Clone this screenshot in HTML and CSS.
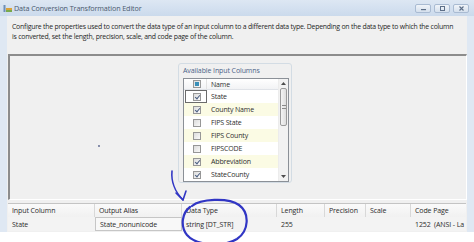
FILE: index.html
```html
<!DOCTYPE html>
<html lang="en">
<head>
  <meta charset="UTF-8">
  <title>Data Conversion Transformation Editor</title>
  <link rel="stylesheet" href="styles.css">
</head>
<body>
  <div class="window">
    <div class="titlebar">
      <svg class="app-icon" width="10" height="9" viewBox="0 0 10 9">
        <rect x="0.5" y="1" width="2" height="7" fill="#6f8fb6"/>
        <rect x="3" y="4" width="6" height="4" fill="#d9a33a"/>
        <rect x="3" y="6" width="6" height="2" fill="#7aa94a"/>
      </svg>
      <span class="title">Data Conversion Transformation Editor</span>
      <div class="caption">
        <span class="cbtn">
          <svg width="7" height="5" viewBox="0 0 7 5"><rect x="1" y="3" width="5" height="1.2" fill="#5d6f88"/></svg>
        </span>
        <span class="cbtn">
          <svg width="7" height="5" viewBox="0 0 7 5"><rect x="1.5" y="0.5" width="4" height="4" fill="none" stroke="#5d6f88" stroke-width="1"/></svg>
        </span>
        <span class="cbtn">
          <svg width="7" height="5" viewBox="0 0 7 5"><path d="M1.5 0.5 L5.5 4.5 M5.5 0.5 L1.5 4.5" stroke="#5d6f88" stroke-width="1.1"/></svg>
        </span>
      </div>
    </div>

    <div class="client">
      <p class="desc">Configure the properties used to convert the data type of an input column to a different data type. Depending on the data type to which the column<br>is converted, set the length, precision, scale, and code page of the column.</p>

      <div class="panel">
        <div class="avail">
          <div class="avail-title">Available Input Columns</div>
          <div class="avail-grid">
            <div class="avail-list">
              <div class="avail-head">
                <div class="chk-cell head-chk"><span class="box partial"></span></div>
                <div class="name-cell">Name</div>
              </div>
              <div class="avail-row">
                <div class="chk-cell focused"><span class="box checked"></span></div>
                <div class="name-cell">State</div>
              </div>
              <div class="avail-row alt">
                <div class="chk-cell"><span class="box checked"></span></div>
                <div class="name-cell">County Name</div>
              </div>
              <div class="avail-row">
                <div class="chk-cell"><span class="box"></span></div>
                <div class="name-cell">FIPS State</div>
              </div>
              <div class="avail-row alt">
                <div class="chk-cell"><span class="box"></span></div>
                <div class="name-cell">FIPS County</div>
              </div>
              <div class="avail-row">
                <div class="chk-cell"><span class="box"></span></div>
                <div class="name-cell">FIPSCODE</div>
              </div>
              <div class="avail-row alt">
                <div class="chk-cell"><span class="box checked"></span></div>
                <div class="name-cell">Abbreviation</div>
              </div>
              <div class="avail-row">
                <div class="chk-cell"><span class="box checked"></span></div>
                <div class="name-cell">StateCounty</div>
              </div>
            </div>
            <div class="vscroll">
              <div class="sbtn">
                <svg width="5" height="3" viewBox="0 0 5 3"><path d="M0 3 L2.5 0 L5 3 Z" fill="#4d4d4d"/></svg>
              </div>
              <div class="thumb"><span class="grip"></span></div>
              <div class="track"></div>
              <div class="sbtn">
                <svg width="5" height="3" viewBox="0 0 5 3"><path d="M0 0 L2.5 3 L5 0 Z" fill="#4d4d4d"/></svg>
              </div>
            </div>
          </div>
        </div>
      </div>

      <div class="grid">
        <div class="grid-row grid-head">
          <div class="cell c1">Input Column</div>
          <div class="cell c2">Output Alias</div>
          <div class="cell c3">Data Type</div>
          <div class="cell c4">Length</div>
          <div class="cell c5">Precision</div>
          <div class="cell c6">Scale</div>
          <div class="cell c7">Code Page</div>
        </div>
        <div class="grid-row grid-data">
          <div class="cell c1">State</div>
          <div class="cell c2 edit">State_nonunicode</div>
          <div class="cell c3">string [DT_STR]</div>
          <div class="cell c4">255</div>
          <div class="cell c5"></div>
          <div class="cell c6"></div>
          <div class="cell c7">1252&nbsp; (ANSI - La</div>
        </div>
      </div>
    </div>
  </div>

  <!-- hand drawn annotation over the screenshot -->
  <svg class="ink" width="474" height="242" viewBox="0 0 474 242">
    <circle cx="99" cy="146" r="0.9" fill="#55608a"/>
    <path d="M172 171 C171 181 175 192 183 200" fill="none" stroke="#3136c4" stroke-width="1.6" stroke-linecap="round"/>
    <path d="M176 193 L183 200 L186 191" fill="none" stroke="#3136c4" stroke-width="1.6" stroke-linecap="round" stroke-linejoin="round"/>
    <path d="M192 206 C200 199 228 197 239 205 C250 213 249 231 237 239 C224 247 196 246 187 235 C180 226 182 213 190 207" fill="none" stroke="#3136c4" stroke-width="2.2" stroke-linecap="round"/>
  </svg>
</body>
</html>
```

FILE: styles.css
```css
* { box-sizing: border-box; }
body {
  margin: 0;
  width: 474px;
  height: 242px;
  overflow: hidden;
  position: relative;
  background: #ffffff;
  font-family: "Open Sans", "Noto Sans", sans-serif;
  color: #2b2b2b;
}
/* Window frame */
.window {
  height: 232px;
  background: #dfe8f3;
  display: flex;
  flex-direction: column;
}
.titlebar {
  height: 16px;
  flex: none;
  background: linear-gradient(#dde7f3, #cbdaec);
  display: flex;
  align-items: center;
  padding-left: 3px;
}
.app-icon { margin-right: 1px; }
.title {
  font-size: 7.2px;
  letter-spacing: -0.1px;
  color: #4b5a6e;
}
.caption {
  margin-left: auto;
  display: flex;
  gap: 3px;
  padding-right: 5px;
}
.cbtn {
  width: 16px;
  height: 9px;
  border: 1px solid #a9bbd2;
  border-radius: 2px;
  background: linear-gradient(#f0f4f9, #d5e0ed);
  display: flex;
  align-items: center;
  justify-content: center;
}
/* Client area */
.client {
  flex: 1;
  margin: 0 7px;
  background: #f0f0f0;
  display: flex;
  flex-direction: column;
}
.desc {
  margin: 0;
  padding: 6px 5px 0 5px;
  font-size: 6.9px;
  line-height: 10px;
  letter-spacing: -0.22px;
  white-space: nowrap;
  color: #262626;
}
.panel {
  margin: 12px 0 0 1px;
  height: 146px;
  border-top: 2px solid #8c8c8c;
  border-left: 2px solid #8c8c8c;
  border-right: 1px solid #ffffff;
  border-bottom: 1px solid #ffffff;
  padding: 7px 0 0 168px;
}
/* Available Input Columns box */
.avail {
  width: 114px;
  height: 120px;
  border: 1px solid #d3dce4;
  border-radius: 3px;
  padding: 0 2px 0 4px;
  background: #f0f0f0;
}
.avail-title {
  height: 14px;
  line-height: 14px;
  font-size: 7px;
  letter-spacing: -0.1px;
  color: #4b6388;
}
.avail-grid {
  height: 104px;
  border: 1px solid #8b9097;
  background: #ffffff;
  display: flex;
}
.avail-list { flex: 1; }
.avail-head {
  height: 11px;
  display: flex;
  align-items: center;
  background: linear-gradient(#ffffff, #f2f3f5);
  border-bottom: 1px solid #e0e3e8;
}
.avail-row {
  height: 13px;
  display: flex;
  align-items: center;
  background: #ffffff;
}
.avail-row.alt { background: #fbfbe4; }
.chk-cell {
  width: 23px;
  height: 100%;
  display: flex;
  align-items: center;
  justify-content: center;
  padding-left: 3px;
}
.head-chk { border-right: 1px solid #e2e2e2; }
.chk-cell.focused { border: 1px solid #6b6b6b; margin-left: 1px; width: 22px; padding-left: 2px; }
.name-cell {
  padding-left: 4px;
  font-size: 7px;
  letter-spacing: -0.15px;
  color: #2e2e2e;
  white-space: nowrap;
}
.box {
  width: 8px;
  height: 8px;
  border: 1px solid #979797;
  background: linear-gradient(135deg, #dcdcdc, #fafafa);
  position: relative;
}
.box.partial::after {
  content: "";
  position: absolute;
  inset: 1px;
  background: #3a8fb8;
}
.box.checked::after {
  content: "";
  position: absolute;
  left: 2px;
  top: 0px;
  width: 2px;
  height: 4px;
  border-right: 1.2px solid #4b5f82;
  border-bottom: 1.2px solid #4b5f82;
  transform: rotate(40deg);
}
/* vertical scrollbar */
.vscroll {
  width: 10px;
  background: #f2f2f2;
  border-left: 1px solid #ececec;
  display: flex;
  flex-direction: column;
}
.sbtn {
  height: 9px;
  flex: none;
  display: flex;
  align-items: center;
  justify-content: center;
}
.thumb {
  height: 38px;
  flex: none;
  margin: 0 1px;
  border: 1px solid #9b9b9b;
  border-radius: 2px;
  background: linear-gradient(90deg, #f4f4f4, #dedede);
  display: flex;
  align-items: center;
  justify-content: center;
}
.grip {
  width: 4px;
  height: 4px;
  border-top: 1px solid #8a8a8a;
  border-bottom: 1px solid #8a8a8a;
}
.track { flex: 1; }
/* Bottom conversion grid */
.grid {
  margin: 3px 1px 0 1px;
  font-size: 7px;
  letter-spacing: -0.1px;
}
.grid-row {
  display: flex;
  height: 14px;
}
.grid-head {
  background: linear-gradient(#fafafa, #f1f1f1);
  border-top: 1px solid #c4c4c4;
}
.grid-data { background: #f3f3f3; }
.cell {
  padding-left: 4px;
  display: flex;
  align-items: center;
  white-space: nowrap;
  overflow: hidden;
  color: #2b2b2b;
}
.grid-head .cell { border-right: 1px solid #d8d8d8; }
.grid-head .c7 { border-right: none; }
.cell.edit {
  border: 1px solid #c6c6c6;
  background: #f8f8f8;
}
.c1 { width: 87px; }
.c2 { width: 87px; }
.c3 { width: 95px; }
.c4 { width: 48px; }
.c5 { width: 41px; }
.c6 { width: 45px; }
.c7 { width: 55px; }
/* annotation overlay */
.ink {
  position: absolute;
  left: 0;
  top: 0;
  pointer-events: none;
}
```
